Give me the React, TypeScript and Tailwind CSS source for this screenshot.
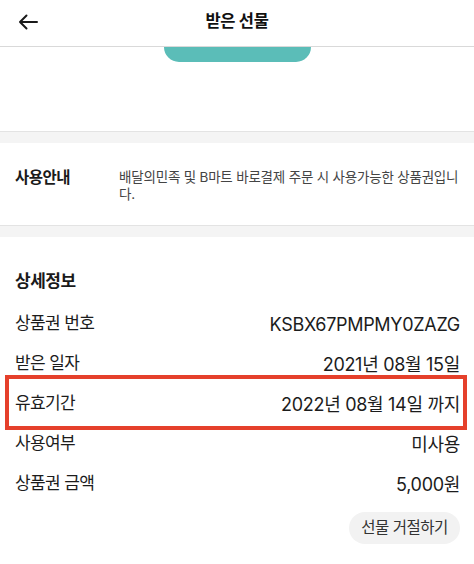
import React from "react";

const font = { fontFamily: "Inter, 'Noto Sans CJK KR', sans-serif" };

function Row({ label, value, highlight }: { label: string; value: string; highlight?: boolean }) {
  return (
    <div className="relative flex h-[40px] items-center justify-between pl-[15px] pr-[14px] text-[#1c1c1c]">
      <span className="text-[17px] tracking-[-0.6px]">{label}</span>
      <span className="text-[18px] tracking-[-0.3px]">{value}</span>
      {highlight && (
        <span className="pointer-events-none absolute left-[5px] right-[7px] top-[-9px] bottom-[-6px] border-[4px] border-[#e5402b]" />
      )}
    </div>
  );
}

export default function App() {
  return (
    <div className="h-[564px] w-[474px] overflow-hidden bg-white" style={font}>
      <header className="relative flex h-[47px] items-center justify-center border-b border-[#d9d9d9] pb-[3px]">
        <svg className="absolute left-[18px] top-[14px]" width="20" height="16" viewBox="0 0 20 16" fill="none">
          <path d="M19 8H2M8.5 1.5L2 8l6.5 6.5" stroke="#1a1a1a" strokeWidth="2" strokeLinecap="round" strokeLinejoin="round" />
        </svg>
        <h1 className="text-[16.5px] font-semibold tracking-[-0.4px] text-[#111]">받은 선물</h1>
      </header>
      <div className="flex h-[84px] justify-center">
        <div className="h-[15px] w-[147px] rounded-b-[16px] bg-[#5bbdb8]" />
      </div>
      <div className="h-[12px] border-t border-[#e3e3e3] bg-[#f4f4f4]" />
      <section className="flex h-[82px] items-start pl-[15px] pt-[26px]">
        <div className="w-[104px] text-[15.5px] font-bold leading-[18px] tracking-[-0.5px] text-[#1a1a1a]">사용안내</div>
        <p className="text-[13.5px] leading-[17px] tracking-[-0.2px] text-[#444]">
          <span className="whitespace-nowrap">배달의민족 및 B마트 바로결제 주문 시 사용가능한 상품권입니</span>
          <br />다.
        </p>
      </section>
      <div className="h-[12px] border-t border-[#e3e3e3] bg-[#f4f4f4]" />
      <section className="pt-[32px]">
        <h2 className="mb-[11px] pl-[15px] text-[17px] font-bold leading-[24px] tracking-[-0.5px] text-[#1a1a1a]">상세정보</h2>
        <Row label="상품권 번호" value="KSBX67PMPMY0ZAZG" />
        <Row label="받은 일자" value="2021년 08월 15일" />
        <Row label="유효기간" value="2022년 08월 14일 까지" highlight />
        <Row label="사용여부" value="미사용" />
        <Row label="상품권 금액" value="5,000원" />
        <div className="mt-[8px] flex justify-end pr-[14px]">
          <button className="flex h-[32px] w-[111px] items-center justify-center rounded-full bg-[#f2f2f2] text-[15.5px] tracking-[-0.5px] text-[#333]">
            선물 거절하기
          </button>
        </div>
      </section>
    </div>
  );
}
